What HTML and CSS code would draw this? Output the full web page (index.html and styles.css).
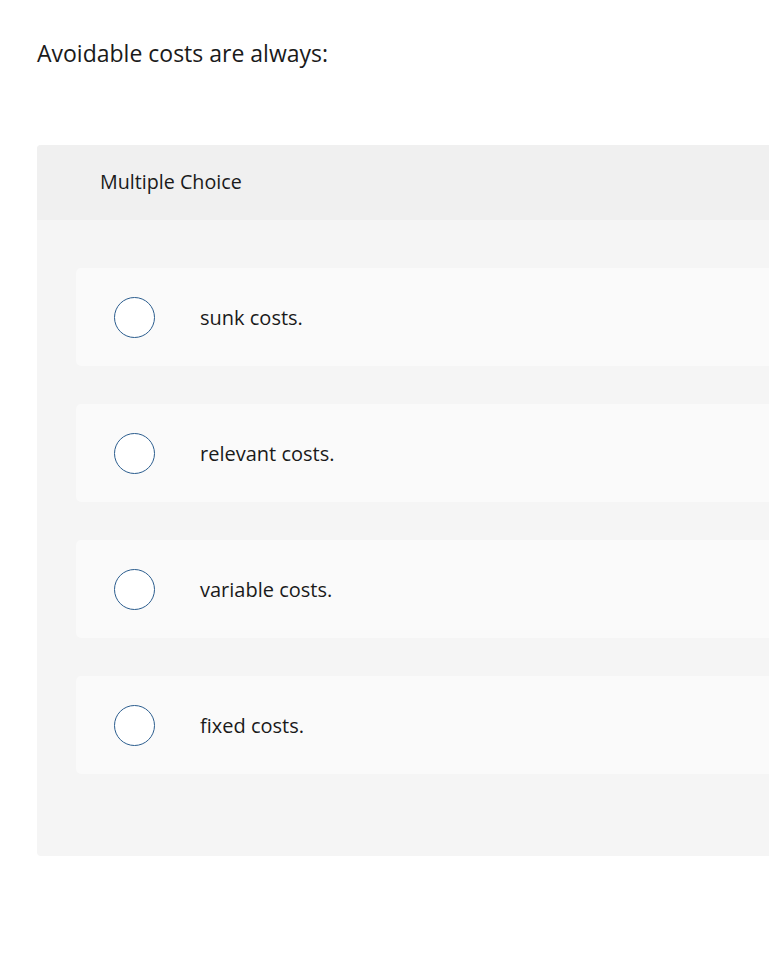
FILE: index.html
```html
<!DOCTYPE html>
<html>
<head>
<meta charset="utf-8">
<link rel="stylesheet" href="styles.css">
</head>
<body>
<div class="page">
  <p class="question">Avoidable costs are always:</p>
  <div class="panel">
    <div class="panel-head">Multiple Choice</div>
    <div class="panel-body">
      <div class="option"><span class="radio"></span><span class="label">sunk costs.</span></div>
      <div class="option"><span class="radio"></span><span class="label">relevant costs.</span></div>
      <div class="option"><span class="radio"></span><span class="label">variable costs.</span></div>
      <div class="option"><span class="radio"></span><span class="label">fixed costs.</span></div>
    </div>
  </div>
</div>
</body>
</html>
```
FILE: styles.css
```css
html, body {
  margin: 0;
  padding: 0;
  overflow: hidden;
  background: #fff;
}
.page {
  padding: 38px 0 0 37px;
  font-family: "Open Sans", "Lato", sans-serif;
  color: #1a1a1a;
}
.question {
  margin: 0;
  font-size: 23px;
  line-height: 30px;
}
.panel {
  margin-top: 77px;
  width: calc(100vw - 37px);
  border-radius: 4px 0 0 4px;
  overflow: hidden;
  background: #f5f5f5;
}
.panel-head {
  height: 75px;
  box-sizing: border-box;
  background: #f0f0f0;
  padding: 24px 0 0 63px;
  font-size: 19.7px;
  line-height: 26px;
}
.panel-body {
  padding: 48px 0 82px 39px;
  display: flex;
  flex-direction: column;
  gap: 38px;
}
.option {
  height: 98px;
  background: #fafafa;
  border-radius: 5px 0 0 5px;
  display: flex;
  align-items: center;
  padding-left: 38px;
}
.radio {
  width: 39px;
  height: 39px;
  margin-top: 1px;
  border: 1.5px solid #2b5d8e;
  border-radius: 50%;
  background: #fff;
  flex: none;
}
.label {
  margin-left: 45px;
  padding-top: 2px;
  font-size: 20px;
  line-height: 26px;
}
```
